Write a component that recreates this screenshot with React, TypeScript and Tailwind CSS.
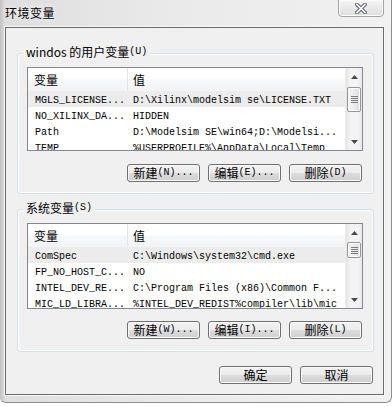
import React from "react";

const mono = "font-['Liberation_Mono',monospace] text-[10px]";
const zh = "font-['Noto_Sans_CJK_SC',sans-serif] text-[12px]";

function Label({ z, s }: { z: string; s?: string }) {
  return (
    <span className="whitespace-nowrap text-black leading-none flex items-center">
      <span className={zh}>{z}</span>
      {s ? <span className={mono}>{s}</span> : null}
    </span>
  );
}

function Btn({ z, s }: { z: string; s?: string }) {
  return (
    <div className="w-[73px] h-[18px] rounded-[3px] border border-[#707070] bg-[linear-gradient(to_bottom,#f2f2f2_0%,#ebebeb_50%,#dddddd_50%,#cfcfcf_100%)] shadow-[inset_0_0_0_1px_#fbfbfb] flex items-center justify-center">
      <Label z={z} s={s} />
    </div>
  );
}

function Scrollbar({ thumbTop, thumbH }: { thumbTop: number; thumbH: number }) {
  return (
    <div className="w-[17px] h-full shrink-0 flex flex-col bg-[linear-gradient(to_right,#e4e4e4_0%,#f3f3f3_25%,#f3f3f3_75%,#e9e9e9_100%)] border-l border-[#ececec]">
      <div className="h-[17px] shrink-0 flex items-center justify-center">
        <svg width="7" height="4" viewBox="0 0 7 4">
          <path d="M3.5 0 L7 4 L0 4 Z" fill="#4a4a4a" />
        </svg>
      </div>
      <div className="flex-1 flex flex-col">
        <div style={{ height: thumbTop }} className="shrink-0" />
        <div
          style={{ height: thumbH }}
          className="mx-[1px] shrink-0 rounded-[2px] border border-[#979797] bg-[linear-gradient(to_right,#f4f4f4_0%,#ececec_50%,#dcdcdc_100%)] shadow-[inset_0_0_0_1px_#fafafa] flex flex-col items-center justify-center gap-[1px]"
        >
          <div className="w-[7px] h-[1px] bg-[#7c7c7c]" />
          <div className="w-[7px] h-[1px] bg-[#7c7c7c]" />
          <div className="w-[7px] h-[1px] bg-[#7c7c7c]" />
          <div className="w-[7px] h-[1px] bg-[#7c7c7c]" />
        </div>
        <div className="flex-1" />
      </div>
      <div className="h-[17px] shrink-0 flex items-center justify-center">
        <svg width="7" height="4" viewBox="0 0 7 4">
          <path d="M0 0 L7 0 L3.5 4 Z" fill="#4a4a4a" />
        </svg>
      </div>
    </div>
  );
}

function List({
  rows,
  heightClass,
  thumbTop,
  thumbH,
}: {
  rows: [string, string][];
  heightClass: string;
  thumbTop: number;
  thumbH: number;
}) {
  return (
    <div className={`${heightClass} w-[336px] border border-[#828790] bg-white flex overflow-hidden`}>
      <div className="flex-1 min-w-0 flex flex-col overflow-hidden">
        <div className="h-[23px] shrink-0 flex bg-[linear-gradient(to_bottom,#ffffff_0%,#ffffff_45%,#f6f7f8_55%,#f2f3f5_100%)]">
          <div className="w-[100px] shrink-0 border-r border-[#e2e4e7] pl-[6px] flex items-center">
            <Label z="变量" />
          </div>
          <div className="pl-[5px] flex items-center">
            <Label z="值" />
          </div>
        </div>
        {rows.map(([a, b], i) => (
          <div
            key={i}
            className={`h-[16px] shrink-0 flex items-center ${i === 0 ? "bg-[#ececec]" : "bg-white"}`}
          >
            <div className={`w-[100px] shrink-0 pl-[7px] pt-[2px] whitespace-nowrap overflow-hidden text-black ${mono}`}>{a}</div>
            <div className={`flex-1 min-w-0 pl-[5px] pt-[2px] whitespace-nowrap overflow-hidden text-black ${mono}`}>{b}</div>
          </div>
        ))}
      </div>
      <Scrollbar thumbTop={thumbTop} thumbH={thumbH} />
    </div>
  );
}

function Group({
  title,
  titleS,
  children,
  className,
}: {
  title: string;
  titleS: string;
  children: React.ReactNode;
  className: string;
}) {
  return (
    <div className={`relative w-[357px] ml-[11px] rounded-[3px] border border-[#d5dfe5] shadow-[inset_0_0_0_1px_#ffffff] pl-[9px] pr-[10px] ${className}`}>
      <div className="absolute left-[5px] top-[-9px] h-[14px] px-[3px] bg-[#f0f0f0] flex items-center">
        <Label z={title} s={titleS} />
      </div>
      {children}
    </div>
  );
}

export default function App() {
  const userRows: [string, string][] = [
    ["MGLS_LICENSE...", "D:\\Xilinx\\modelsim se\\LICENSE.TXT"],
    ["NO_XILINX_DA...", "HIDDEN"],
    ["Path", "D:\\Modelsim SE\\win64;D:\\Modelsi..."],
    ["TEMP", "%USERPROFILE%\\AppData\\Local\\Temp"],
  ];
  const sysRows: [string, string][] = [
    ["ComSpec", "C:\\Windows\\system32\\cmd.exe"],
    ["FP_NO_HOST_C...", "NO"],
    ["INTEL_DEV_RE...", "C:\\Program Files (x86)\\Common F..."],
    ["MIC_LD_LIBRA...", "%INTEL_DEV_REDIST%compiler\\lib\\mic"],
  ];
  return (
    <div className="w-[392px] h-[407px] bg-white overflow-hidden">
      <div className="w-[392px] h-[403px] border-r border-b border-[#8e8e8e] rounded-b-[6px] bg-[linear-gradient(to_right,#c2c2c2_0px,#dedede_5px,#e9e9e9_40%,#f1f1f1_100%)] pl-[5px] pr-[7px] flex flex-col">
        <div className="h-[27px] shrink-0 flex justify-between items-start">
          <div className="h-[26px] flex items-center">
            <span className={`${zh} text-black [text-shadow:0_0_6px_#ffffff] tracking-[0.5px]`}>环境变量</span>
          </div>
          <div className="w-[46px] h-[18px] mt-[-1px] rounded-b-[4px] border border-[#a4a4a4] bg-[linear-gradient(to_bottom,#f6f6f6_0%,#e9e9e9_50%,#dedede_100%)] shadow-[inset_0_0_0_1px_#fbfbfb] flex items-center justify-center">
            <svg width="12" height="11" viewBox="0 0 12 11">
              <path d="M2 1.5 L10 9.5 M10 1.5 L2 9.5" stroke="#5f6878" strokeWidth="3.8" strokeLinecap="square" />
              <path d="M2 1.5 L10 9.5 M10 1.5 L2 9.5" stroke="#ffffff" strokeWidth="1.6" strokeLinecap="square" />
            </svg>
          </div>
        </div>
        <div className="h-[368px] shrink-0 border border-[#6b6b6b] bg-[#f0f0f0] shadow-[0_0_0_1px_#f7f7f7] flex flex-col">
          <Group title="windos 的用户变量" titleS="(U)" className="mt-[25px] pt-[13px] pb-[11px]">
            <List rows={userRows} heightClass="h-[84px]" thumbTop={2} thumbH={25} />
            <div className="mt-[13px] pr-[1px] flex justify-end gap-[8px]">
              <Btn z="新建" s="(N)..." />
              <Btn z="编辑" s="(E)..." />
              <Btn z="删除" s="(D)" />
            </div>
          </Group>
          <Group title="系统变量" titleS="(S)" className="mt-[15px] pt-[13px] pb-[12px]">
            <List rows={sysRows} heightClass="h-[86px]" thumbTop={1} thumbH={16} />
            <div className="mt-[12px] pr-[1px] flex justify-end gap-[8px]">
              <Btn z="新建" s="(W)..." />
              <Btn z="编辑" s="(I)..." />
              <Btn z="删除" s="(L)" />
            </div>
          </Group>
          <div className="mt-[14px] mr-[10px] flex justify-end gap-[8px]">
            <Btn z="确定" />
            <Btn z="取消" />
          </div>
        </div>
      </div>
    </div>
  );
}
